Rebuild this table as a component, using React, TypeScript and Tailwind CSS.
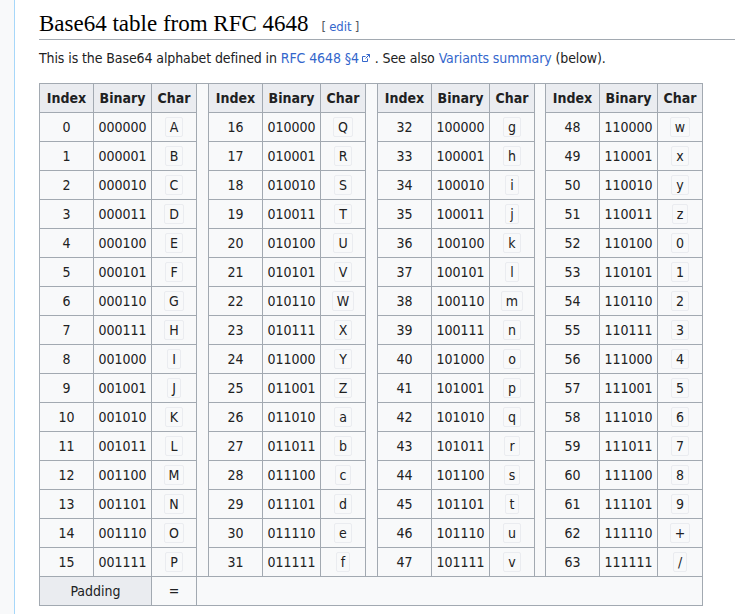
import React from "react";

const ALPHA = "ABCDEFGHIJKLMNOPQRSTUVWXYZabcdefghijklmnopqrstuvwxyz0123456789+/";
const bin = (n: number) => n.toString(2).padStart(6, "0");

const cell = "border border-[#a2a9b1] text-center align-middle p-0";

function ExtIcon() {
  return (
    <svg width="10" height="10" viewBox="0 0 10 10" className="inline-block align-baseline ml-[2px]" fill="none" stroke="#3366cc" strokeWidth="1">
      <path d="M5.5 1.5h3v3" />
      <path d="M8.5 1.5L4.5 5.5" />
      <path d="M6.5 5.5v3h-5v-5h3" />
    </svg>
  );
}

export default function App() {
  const groups = [0, 1, 2, 3];
  const rows = Array.from({ length: 16 }, (_, i) => i);
  return (
    <div className="flex h-[614px] w-[735px] overflow-hidden bg-white text-[#202122] font-['DejaVu_Sans_Condensed','Liberation_Sans',sans-serif]">
      <div className="w-[14px] shrink-0 bg-[#f8f9fa]" />
      <div className="w-px shrink-0 bg-[#a7d7f9]" />
      <div className="flex-1 pl-6">
        <h2 className="h-[40px] pt-[9px] border-b border-[#a2a9b1] text-[23px] leading-[30px] text-black font-normal font-['Liberation_Serif',serif] whitespace-nowrap">
          Base64 table from RFC 4648
          <span className="ml-[13px] text-[13px] leading-none font-['DejaVu_Sans_Condensed','Liberation_Sans',sans-serif] text-[#54595d] align-baseline">
            [<span className="mx-[3px] text-[#3366cc]">edit</span>]
          </span>
        </h2>
        <p className="mt-[7px] text-[14px] leading-[22px] tracking-[-0.1px] whitespace-nowrap">
          This is the Base64 alphabet defined in{" "}
          <span className="text-[#3366cc]">RFC 4648 §4</span>
          <ExtIcon /> . See also <span className="text-[#3366cc]">Variants summary</span> (below).
        </p>
        <table className="mt-[14px] border-collapse table-fixed text-[14px] bg-[#f8f9fa]">
          <colgroup>
            {groups.map((g) => (
              <React.Fragment key={g}>
                <col className="w-[54px]" />
                <col className="w-[58px]" />
                <col className="w-[45px]" />
                {g < 3 && <col className={g === 2 ? "w-[11px]" : "w-[12px]"} />}
              </React.Fragment>
            ))}
          </colgroup>
          <tbody>
            <tr className="h-[29px]">
              {groups.map((g) => (
                <React.Fragment key={g}>
                  <th className={`${cell} bg-[#eaecf0] font-bold`}>Index</th>
                  <th className={`${cell} bg-[#eaecf0] font-bold`}>Binary</th>
                  <th className={`${cell} bg-[#eaecf0] font-bold`}>Char</th>
                  {g < 3 && <td rowSpan={17} className={`${cell} bg-[#f8f9fa]`} />}
                </React.Fragment>
              ))}
            </tr>
            {rows.map((r) => (
              <tr key={r} className="h-[29px]">
                {groups.map((g) => {
                  const n = g * 16 + r;
                  return (
                    <React.Fragment key={g}>
                      <td className={cell}>{n}</td>
                      <td className={cell}>{bin(n)}</td>
                      <td className={cell}>
                        <span className="inline-block rounded-[2px] border border-[#eaecf0] bg-[#f8f9fa] px-[4px] py-[1px] leading-[16px]">
                          {ALPHA[n]}
                        </span>
                      </td>
                    </React.Fragment>
                  );
                })}
              </tr>
            ))}
            <tr className="h-[29px]">
              <th colSpan={2} className={`${cell} bg-[#eaecf0] font-normal`}>Padding</th>
              <td className={cell}>=</td>
              <td colSpan={12} className={cell} />
            </tr>
          </tbody>
        </table>
      </div>
    </div>
  );
}
